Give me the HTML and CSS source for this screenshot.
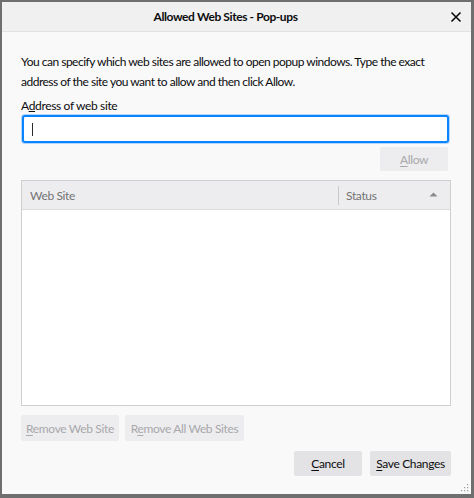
FILE: index.html
```html
<!DOCTYPE html>
<html>
<head>
<meta charset="utf-8">
<link rel="stylesheet" href="styles.css">
</head>
<body>
<div class="window">
  <div class="titlebar">
    <span class="title">Allowed Web Sites - Pop-ups</span>
    <span class="close">
      <svg width="12" height="12" viewBox="0 0 12 12"><path d="M1.5 1.5 L10.5 10.5 M10.5 1.5 L1.5 10.5" stroke="#0c0c0d" stroke-width="1.6" fill="none"/></svg>
    </span>
  </div>
  <div class="content">
    <p class="intro">You can specify which web sites are allowed to open popup windows. Type the exact address of the site you want to allow and then click Allow.</p>
    <label class="label">A<u>d</u>dress of web site</label>
    <div class="input"><span class="caret"></span></div>
    <div class="allow-row">
      <button class="btn disabled allow"><u>A</u>llow</button>
    </div>
    <div class="table">
      <div class="thead">
        <div class="col site">Web Site</div>
        <div class="col status">Status
          <svg class="sort" width="9" height="5" viewBox="0 0 9 5"><path d="M0.5 4.5 L4.5 0.5 L8.5 4.5 Z" fill="#8a8a8d"/></svg>
        </div>
      </div>
      <div class="tbody"></div>
    </div>
    <div class="remove-row">
      <button class="btn disabled rm1"><u>R</u>emove Web Site</button>
      <button class="btn disabled rm2">R<u>e</u>move All Web Sites</button>
    </div>
    <div class="footer">
      <button class="btn cancel"><u>C</u>ancel</button>
      <button class="btn save"><u>S</u>ave Changes</button>
    </div>
  </div>
  <svg class="grip" width="8" height="8" viewBox="0 0 8 8">
    <rect x="6" y="0" width="1.2" height="1.2" fill="#9a9a9a"/>
    <rect x="3" y="3" width="1.2" height="1.2" fill="#9a9a9a"/>
    <rect x="6" y="3" width="1.2" height="1.2" fill="#9a9a9a"/>
    <rect x="0" y="6" width="1.2" height="1.2" fill="#9a9a9a"/>
    <rect x="3" y="6" width="1.2" height="1.2" fill="#9a9a9a"/>
    <rect x="6" y="6" width="1.2" height="1.2" fill="#9a9a9a"/>
  </svg>
</div>
</body>
</html>
```
FILE: styles.css
```css
html, body {
  margin: 0;
  padding: 0;
}
body {
  background: #6f6f6f;
  width: 474px;
  height: 498px;
  overflow: hidden;
  font-family: Lato, "Noto Sans", sans-serif;
  font-size: 12px;
  letter-spacing: -0.35px;
  color: #0c0c0d;
}
.window {
  position: relative;
  margin: 2px 3px 0 2px;
  width: 469px;
  height: 492px;
  background: #f9f9fa;
  display: flex;
  flex-direction: column;
  box-sizing: border-box;
}
.titlebar {
  height: 29px;
  flex: none;
  background: #f0f0f0;
  border-bottom: 1px solid #e2e2e2;
  display: flex;
  align-items: center;
  justify-content: center;
  position: relative;
  padding-right: 22px;
}
.title {
  font-weight: 700;
  font-size: 12px;
  letter-spacing: -0.4px;
}
.close {
  position: absolute;
  right: 9px;
  top: 9px;
  width: 12px;
  height: 12px;
  display: flex;
}
.content {
  padding: 20px 20px 0 19px;
  display: flex;
  flex-direction: column;
}
.intro {
  margin: 0;
  line-height: 20px;
  padding-right: 6px;
  letter-spacing: -0.5px;
}
.label {
  margin-top: 5px;
  line-height: 18px;
  display: block;
}
.input {
  margin: 1px 3px 0 2px;
  height: 26px;
  box-sizing: border-box;
  background: #fff;
  border: 1px solid #0a84ff;
  border-radius: 2px;
  box-shadow: 0 0 0 1px #0a84ff, 0 0 0 2px rgba(10,132,255,0.3);
  display: flex;
  align-items: center;
  padding-left: 8px;
}
.caret {
  width: 1px;
  height: 13px;
  background: #2a2a2e;
}
.allow-row {
  display: flex;
  justify-content: flex-end;
  margin: 5px 3px 0 0;
}
.btn {
  font-family: inherit;
  font-size: 12px;
  letter-spacing: -0.35px;
  border: none;
  border-radius: 2px;
  background: #e3e3e5;
  color: #0c0c0d;
  padding: 0 4px;
  margin: 0;
  white-space: nowrap;
}
.btn u {
  text-decoration-thickness: 1px;
  text-underline-offset: 2px;
}
.btn.disabled {
  background: #ededef;
  color: #a8a8ab;
}
.allow {
  width: 68px;
  height: 24px;
}
.table {
  margin-top: 9px;
  height: 226px;
  box-sizing: border-box;
  border: 1px solid #cfcfd1;
  display: flex;
  flex-direction: column;
  background: #fff;
}
.thead {
  height: 29px;
  flex: none;
  box-sizing: border-box;
  background: #ededf0;
  border-bottom: 1px solid #dcdcde;
  display: flex;
  align-items: center;
  color: #737373;
}
.col.site {
  width: 317px;
  padding-left: 8px;
  box-sizing: border-box;
  height: 19px;
  line-height: 19px;
  border-right: 1px solid #c8c8ca;
}
.col.status {
  flex: 1;
  padding: 0 12px 0 7px;
  display: flex;
  align-items: center;
  justify-content: space-between;
  line-height: 19px;
}
.sort {
  margin-top: -1px;
}
.tbody {
  flex: 1;
}
.remove-row {
  display: flex;
  gap: 6px;
  margin-top: 9px;
}
.rm1 {
  width: 98px;
  height: 26px;
}
.rm2 {
  width: 119px;
  height: 26px;
}
.footer {
  display: flex;
  justify-content: flex-end;
  gap: 8px;
  margin-top: 10px;
}
.cancel {
  width: 68px;
  height: 25px;
}
.save {
  width: 81px;
  height: 25px;
}
.grip {
  position: absolute;
  right: 2px;
  bottom: 2px;
}
```
